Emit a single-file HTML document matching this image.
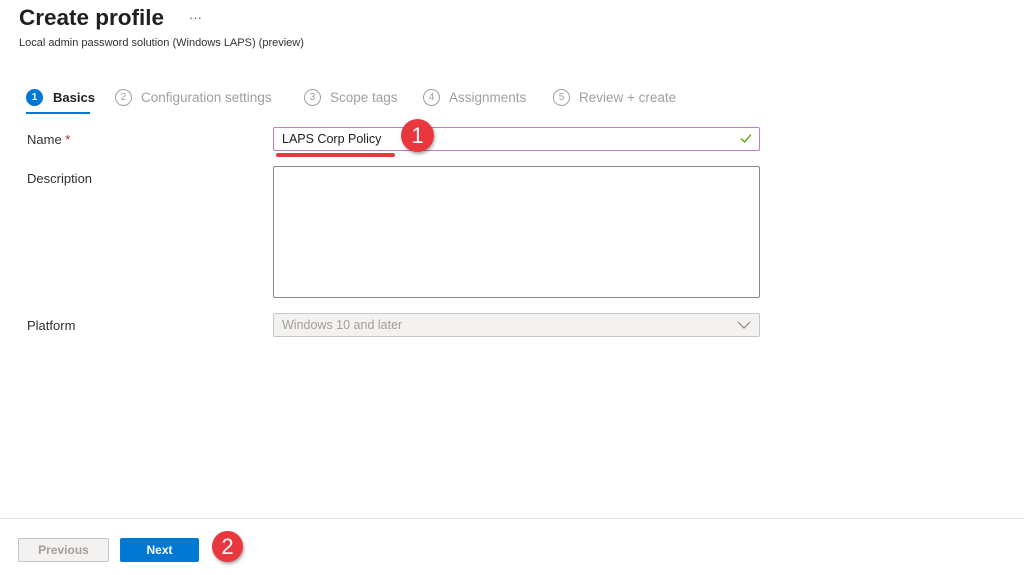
<!DOCTYPE html>
<html><head><meta charset="utf-8"><style>
*{margin:0;padding:0;box-sizing:border-box}
body{width:1024px;height:575px;background:#fff;font-family:"Liberation Sans",sans-serif;position:relative;overflow:hidden;color:#323130}
.a{position:absolute}
.step{position:absolute;top:89px;font-size:13.5px;color:#a19f9d;white-space:nowrap;display:flex;align-items:center}
.c{width:17px;height:17px;border-radius:50%;border:1px solid #a19f9d;font-size:10px;display:inline-flex;align-items:center;justify-content:center;margin-right:9px}
.lbl{position:absolute;left:27px;font-size:13px;color:#323130}
.box{position:absolute;left:273px;width:487px;border:1px solid #8a8886;border-radius:2px}
.badge{position:absolute;border-radius:50%;background:#e8383d;color:#fff;display:flex;align-items:center;justify-content:center;font-size:22px;box-shadow:1px 2px 3px rgba(0,0,0,.35)}
</style></head><body>
<div class="a" style="left:19px;top:5px;font-size:22.5px;font-weight:bold;color:#201f1e">Create profile</div>
<div class="a" style="left:189px;top:10px;font-size:13px;color:#605e5c">···</div>
<div class="a" style="left:19px;top:37px;font-size:11px;color:#323130">Local admin password solution (Windows LAPS) (preview)</div>

<div class="step" style="left:26px;color:#201f1e;font-weight:bold;font-size:13px"><span class="c" style="background:#0078d4;border-color:#0078d4;color:#fff;margin-right:10px">1</span>Basics</div>
<div class="a" style="left:26px;top:112px;width:64px;height:2px;background:#0078d4"></div>
<div class="step" style="left:115px"><span class="c">2</span>Configuration settings</div>
<div class="step" style="left:304px"><span class="c">3</span>Scope tags</div>
<div class="step" style="left:423px"><span class="c">4</span>Assignments</div>
<div class="step" style="left:553px"><span class="c">5</span>Review + create</div>

<div class="lbl" style="top:132px">Name <span style="color:#a4262c">*</span></div>
<div class="box" style="top:127px;height:24px;border-color:#b97fc9"></div>
<div class="a" style="left:282px;top:132px;font-size:12.5px;color:#201f1e">LAPS Corp Policy</div>
<svg class="a" style="left:740px;top:132px" width="12" height="12"><path d="M1 6.5 L4.5 10 L11 2.5" stroke="#57a300" stroke-width="1.3" fill="none"/></svg>
<div class="a" style="left:276px;top:153px;width:119px;height:4px;border-radius:2px;background:#e8383d"></div>
<div class="badge" style="left:401px;top:119px;width:33px;height:33px">1</div>

<div class="lbl" style="top:171px">Description</div>
<div class="box" style="top:166px;height:132px"></div>

<div class="lbl" style="top:318px">Platform</div>
<div class="box" style="top:313px;height:24px;background:#f3f2f1;border-color:#c8c6c4"></div>
<div class="a" style="left:282px;top:318px;font-size:12.5px;color:#a19f9d">Windows 10 and later</div>
<svg class="a" style="left:737px;top:320px" width="14" height="10"><path d="M1 2 L7 8 L13 2" stroke="#8a8886" stroke-width="1.2" fill="none"/></svg>

<div class="a" style="left:0;top:518px;width:1024px;height:1px;background:#e1dfdd"></div>
<div class="a" style="left:18px;top:538px;width:91px;height:24px;border:1px solid #c8c6c4;background:#f3f2f1;border-radius:2px;font-size:12px;font-weight:bold;color:#a19f9d;display:flex;align-items:center;justify-content:center">Previous</div>
<div class="a" style="left:120px;top:538px;width:79px;height:24px;background:#0078d4;border-radius:2px;font-size:12px;font-weight:bold;color:#fff;display:flex;align-items:center;justify-content:center">Next</div>
<div class="badge" style="left:212px;top:531px;width:31px;height:31px">2</div>
</body></html>
